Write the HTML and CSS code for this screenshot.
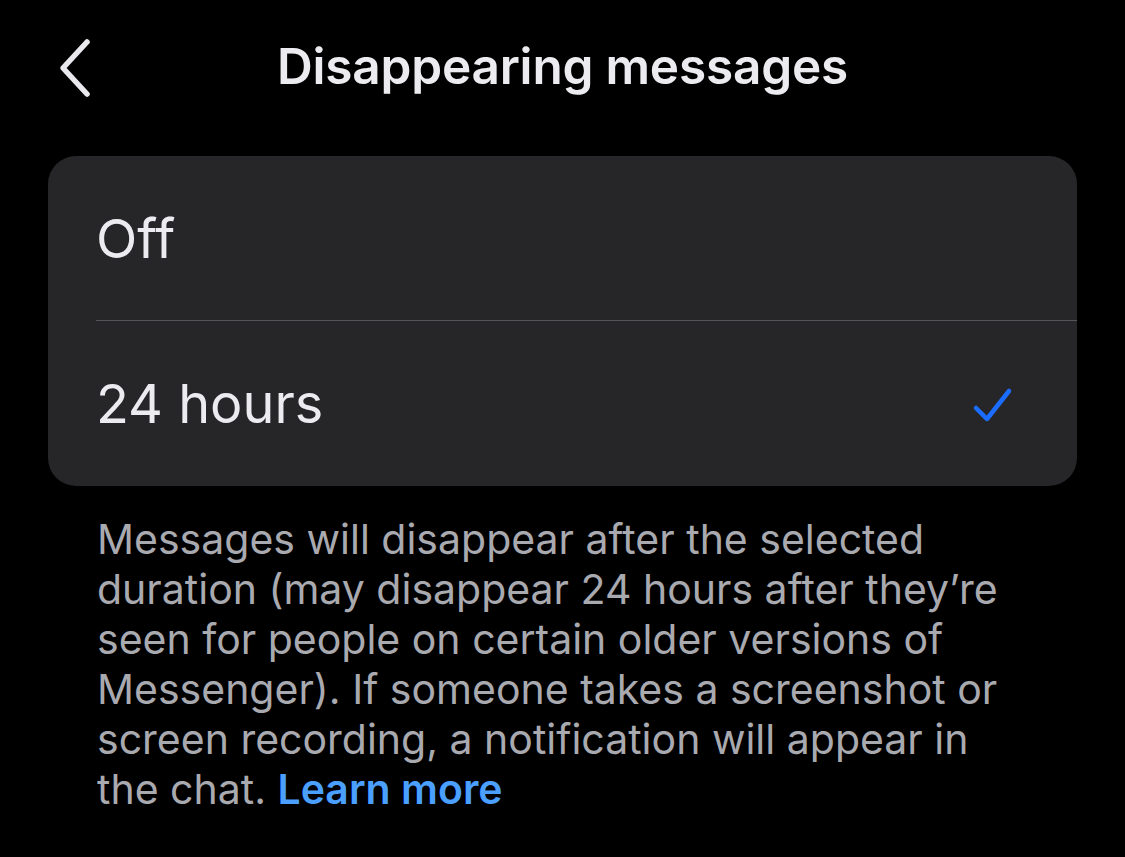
FILE: index.html
```html
<!DOCTYPE html>
<html lang="en">
<head>
<meta charset="utf-8">
<title>Disappearing messages</title>
<link rel="stylesheet" href="styles.css">
</head>
<body>
<div class="screen">
  <header class="nav">
    <button class="back" aria-label="Back">
      <svg width="40" height="62" viewBox="0 0 40 62"><path d="M31 5 L7 31 L31 57" fill="none" stroke="#e8e8ed" stroke-width="5.5" stroke-linecap="round" stroke-linejoin="round"/></svg>
    </button>
    <h1 class="title">Disappearing messages</h1>
  </header>
  <section class="card">
    <div class="row"><span class="label">Off</span></div>
    <div class="row selected"><span class="label">24 hours</span>
      <svg class="check" width="44" height="44" viewBox="0 0 44 44"><path d="M5 24 L16 35 L38 7" fill="none" stroke="#1a6dff" stroke-width="4.5" stroke-linecap="round" stroke-linejoin="round"/></svg>
    </div>
  </section>
  <p class="footer">Messages will disappear after the selected duration (may disappear 24 hours after they’re seen for people on certain older versions of Messenger). If someone takes a screenshot or screen recording, a notification will appear in the chat. <a class="link" href="#">Learn more</a></p>
</div>
</body>
</html>
```

FILE: styles.css
```css
html, body {
  margin: 0;
  padding: 0;
  background: #000;
}
body {
  font-family: Inter, "Noto Sans", sans-serif;
  color: #ececf0;
  width: 1125px;
  height: 857px;
  overflow: hidden;
}
.screen {
  padding: 0 48px;
}
.nav {
  position: relative;
  height: 136px;
  display: flex;
  align-items: center;
  justify-content: center;
}
.back {
  position: absolute;
  left: 8px;
  top: 37px;
  background: none;
  border: 0;
  padding: 0;
  cursor: pointer;
  display: flex;
}
.title {
  margin: 0 0 4px;
  font-size: 49.5px;
  font-weight: 600;
  letter-spacing: -0.2px;
  color: #ececf0;
}
.card {
  margin-top: 20px;
  background: #262628;
  border-radius: 28px;
  overflow: hidden;
}
.row {
  height: 164px;
  display: flex;
  align-items: center;
  justify-content: space-between;
  padding: 0 62px 0 48px;
  box-sizing: border-box;
}
.row + .row {
  height: 166px;
  border-top: 1px solid #545458;
  margin-left: 48px;
  padding-left: 0;
}
.label {
  font-size: 54px;
  font-weight: 400;
  color: #ececf0;
}
.check {
  margin-top: 4px;
}
.footer {
  margin: 28px 0 0;
  padding: 0 40px 0 49px;
  font-size: 41px;
  line-height: 50px;
  color: #a9a9b0;
}
.link {
  color: #4a9fff;
  font-weight: 600;
  text-decoration: none;
}
```
